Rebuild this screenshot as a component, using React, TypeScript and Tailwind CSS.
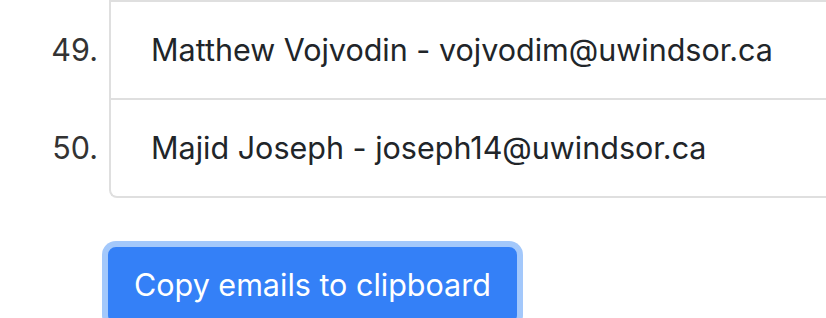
const rows = [
  { n: 49, text: "Matthew Vojvodin - vojvodim@uwindsor.ca" },
  { n: 50, text: "Majid Joseph - joseph14@uwindsor.ca" },
];

export default function App() {
  return (
    <div
      className="w-[826px] h-[318px] overflow-hidden bg-white text-[#212529]"
      style={{ fontFamily: "Inter, 'Noto Sans', sans-serif" }}
    >
      <div className="flex flex-col">
        {rows.map((r, i) => (
          <div key={r.n} className="flex">
            <div className="w-[109px] shrink-0 pr-[11px] text-right text-[30.5px] leading-[48px] pt-[26px] text-[#333]">
              {r.n}.
            </div>
            <div
              className={
                "flex-1 min-w-0 whitespace-nowrap border-l-2 border-t-2 border-[#dfdfdf] px-[40px] py-[24px] text-[30.5px] leading-[48px] " +
                (i === rows.length - 1 ? "border-b-2 rounded-bl-[8px]" : "")
              }
            >
              {r.text}
            </div>
          </div>
        ))}
      </div>
      <div className="pl-[108px] mt-[49px]">
        <button className="whitespace-nowrap rounded-[8px] border-2 border-[#3480f7] bg-[#3480f7] px-[24px] py-[12px] text-[30.5px] leading-[48px] text-white ring-[6px] ring-[#a3c8fb]">
          Copy emails to clipboard
        </button>
      </div>
    </div>
  );
}
